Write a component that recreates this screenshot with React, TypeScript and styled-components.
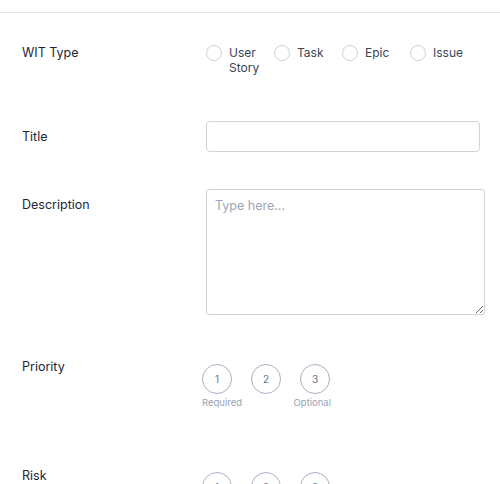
import React, { FC } from 'react';
import styled, { createGlobalStyle } from 'styled-components';

const GlobalStyle = createGlobalStyle`
  html, body {
    margin: 0;
    padding: 0;
    background: #ffffff;
  }
  body {
    font-family: Inter, "Noto Sans", "Liberation Sans", sans-serif;
    color: #273142;
    overflow: hidden;
  }
  * {
    box-sizing: border-box;
  }
`;

const Page = styled.div`
  width: 500px;
  height: 484px;
  overflow: hidden;
  padding-top: 12px;
`;

const Form = styled.form`
  border-top: 1px solid #e3e5eb;
  padding: 0 0 0 22px;
  display: flex;
  flex-direction: column;
`;

const Row = styled.div<{ $top: number }>`
  display: grid;
  grid-template-columns: 184px 1fr;
  align-items: start;
  margin-top: ${p => p.$top}px;
`;

const Label = styled.label<{ $offset?: number }>`
  font-size: 12.5px;
  line-height: 15px;
  font-weight: 400;
  color: #1e2636;
  padding-top: ${p => p.$offset ?? 0}px;
`;

const Control = styled.div<{ $offset?: number }>`
  padding-top: ${p => p.$offset ?? 0}px;
`;

const RadioGroup = styled.div`
  display: flex;
`;

const RadioOption = styled.label`
  width: 68px;
  display: flex;
  align-items: flex-start;
  gap: 7px;
  font-size: 12px;
  line-height: 15px;
  color: #3a4354;
  padding-top: 1px;
`;

const RadioCircle = styled.span`
  flex: none;
  width: 16px;
  height: 16px;
  border-radius: 50%;
  border: 1px solid #cdd1dc;
  background: #fff;
`;

const RadioText = styled.span`
  width: 34px;
`;

const TextInput = styled.input`
  display: block;
  width: 274px;
  height: 31px;
  border: 1px solid #cfd3dd;
  border-radius: 4px;
  outline: none;
  padding: 0 9px;
  font: inherit;
  font-size: 12px;
`;

const TextArea = styled.textarea`
  display: block;
  width: 279px;
  height: 126px;
  border: 1px solid #cfd3dd;
  border-radius: 3px;
  outline: none;
  padding: 7px 8px;
  font-family: Inter, "Noto Sans", sans-serif;
  font-size: 12.5px;
  line-height: 18px;
  color: #273142;

  &::placeholder {
    color: #9ea5b7;
  }
`;

const Scale = styled.div`
  width: 129px;
  margin-left: -4px;
`;

const ScaleDots = styled.div`
  display: flex;
  gap: 19px;
`;

const ScaleDot = styled.span`
  width: 30px;
  height: 30px;
  border-radius: 50%;
  border: 1px solid #a9afc4;
  display: flex;
  align-items: center;
  justify-content: center;
  font-size: 10px;
  color: #6c7386;
`;

const ScaleLegend = styled.div`
  display: flex;
  justify-content: space-between;
  margin-top: 3px;
  font-size: 9.5px;
  line-height: 12px;
  color: #9aa1b3;
`;

const witTypes = ['User Story', 'Task', 'Epic', 'Issue'];

const RatingScale: FC<{ showLegend?: boolean }> = ({ showLegend = true }) => (
  <Scale>
    <ScaleDots>
      {[1, 2, 3].map(n => (
        <ScaleDot key={n}>{n}</ScaleDot>
      ))}
    </ScaleDots>
    {showLegend && (
      <ScaleLegend>
        <span>Required</span>
        <span>Optional</span>
      </ScaleLegend>
    )}
  </Scale>
);

const App: FC = () => {
  return (
    <>
      <GlobalStyle />
      <Page>
        <Form>
          <Row $top={31}>
            <Label $offset={1}>WIT Type</Label>
            <RadioGroup>
              {witTypes.map(t => (
                <RadioOption key={t}>
                  <RadioCircle />
                  <RadioText>{t}</RadioText>
                </RadioOption>
              ))}
            </RadioGroup>
          </Row>

          <Row $top={46}>
            <Label $offset={8}>Title</Label>
            <Control>
              <TextInput type="text" />
            </Control>
          </Row>

          <Row $top={37}>
            <Label $offset={8}>Description</Label>
            <Control>
              <TextArea placeholder="Type here..." />
            </Control>
          </Row>

          <Row $top={44}>
            <Label>Priority</Label>
            <Control $offset={5}>
              <RatingScale />
            </Control>
          </Row>

          <Row $top={58}>
            <Label $offset={1}>Risk</Label>
            <Control $offset={5}>
              <RatingScale />
            </Control>
          </Row>
        </Form>
      </Page>
    </>
  );
};

export default App;
